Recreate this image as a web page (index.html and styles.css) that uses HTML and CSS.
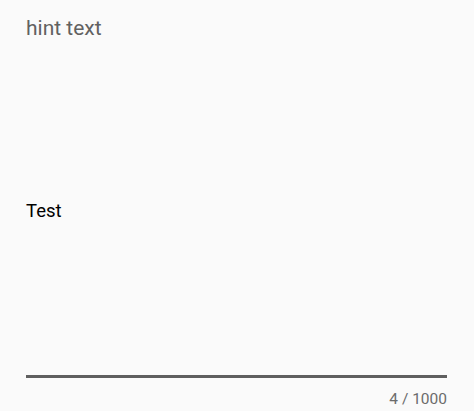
FILE: index.html
```html
<!DOCTYPE html>
<html>
<head>
<meta charset="utf-8">
<link rel="stylesheet" href="styles.css">
</head>
<body>
<div class="field">
  <div class="input-area">
    <div class="hint">hint text</div>
    <div class="value">Test</div>
  </div>
  <div class="underline"></div>
  <div class="counter">4 / 1000</div>
</div>
</body>
</html>
```
FILE: styles.css
```css
html, body {
  margin: 0;
  padding: 0;
  background: #fafafa;
  font-family: Roboto, "Noto Sans", sans-serif;
}
.field {
  display: flex;
  flex-direction: column;
  padding: 16px 27px 0 26px;
  height: 411px;
  box-sizing: border-box;
}
.input-area {
  display: flex;
  flex-direction: column;
  height: 359px;
}
.hint {
  font-size: 21px;
  line-height: 24px;
  color: #616161;
}
.value {
  margin-top: 160px;
  font-size: 18.5px;
  line-height: 22px;
  color: #000;
}
.underline {
  height: 2.5px;
  background: #5f5f5f;
}
.counter {
  margin-top: 13.5px;
  font-size: 15.5px;
  line-height: 16px;
  color: #6b6b6b;
  text-align: right;
}
```
